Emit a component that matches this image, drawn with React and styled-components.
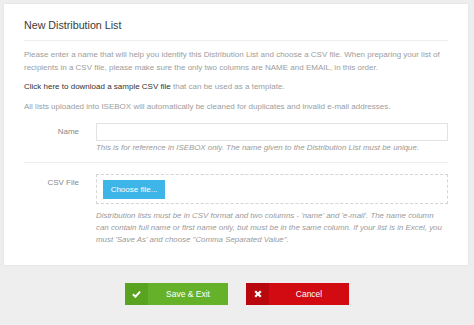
import React from 'react';
import styled, { createGlobalStyle } from 'styled-components';

const GlobalStyle = createGlobalStyle`
  html, body {
    margin: 0;
    padding: 0;
    background: #eeeeee;
    font-family: "Liberation Sans", Arial, sans-serif;
  }
`;

const App = () => {
  return (
    <>
      <GlobalStyle />
      <Page>
        <Card>
          <Title>New Distribution List</Title>
          <Intro>
            Please enter a name that will help you identify this Distribution List and choose a CSV file. When preparing your list of
            recipients in a CSV file, please make sure the only two columns are NAME and EMAIL, in this order.
          </Intro>
          <Intro>
            <DownloadLink href="#">Click here to download a sample CSV file</DownloadLink> that can be used as a template.
          </Intro>
          <Intro>All lists uploaded into ISEBOX will automatically be cleaned for duplicates and invalid e-mail addresses.</Intro>

          <FormRow>
            <Label>Name</Label>
            <Field>
              <TextInput type="text" />
              <Hint>This is for reference in ISEBOX only. The name given to the Distribution List must be unique.</Hint>
            </Field>
          </FormRow>
          <FormRow $last>
            <Label>CSV File</Label>
            <Field>
              <DropZone>
                <ChooseButton type="button">Choose file...</ChooseButton>
              </DropZone>
              <Hint $gap={6}>
                Distribution lists must be in CSV format and two columns - 'name' and 'e-mail'. The name column
                can contain full name or first name only, but must be in the same column. If your list is in Excel, you
                must 'Save As' and choose "Comma Separated Value".
              </Hint>
            </Field>
          </FormRow>
        </Card>

        <Actions>
          <ActionButton type="button" $bg="#66b12a" $iconBg="#5aa321">
            <IconCell>
              <svg width="9" height="8" viewBox="0 0 10 8">
                <path d="M1 4.2 L3.8 7 L9 1.4" fill="none" stroke="#fff" strokeWidth="2.2" />
              </svg>
            </IconCell>
            <ButtonLabel>Save &amp; Exit</ButtonLabel>
          </ActionButton>
          <ActionButton type="button" $bg="#d20a12" $iconBg="#b9070e">
            <IconCell>
              <svg width="8" height="8" viewBox="0 0 8 8">
                <path d="M1.2 1.2 L6.8 6.8 M6.8 1.2 L1.2 6.8" fill="none" stroke="#fff" strokeWidth="2.2" />
              </svg>
            </IconCell>
            <ButtonLabel>Cancel</ButtonLabel>
          </ActionButton>
        </Actions>
      </Page>
    </>
  );
};

const Page = styled.div`
  width: 474px;
  height: 325px;
  padding: 4px 6px 0 4px;
  box-sizing: border-box;
  overflow: hidden;
`;

const Card = styled.div`
  background: #fff;
  box-shadow: 0 0 2px rgba(0, 0, 0, 0.08);
  padding: 15px 20px 13px 20px;
  height: 261px;
  box-sizing: border-box;
`;

const Title = styled.h2`
  margin: 0;
  font-size: 10.7px;
  font-weight: 400;
  color: #3a3a3a;
  line-height: 13px;
  padding-bottom: 8px;
  border-bottom: 1px solid #eeeeee;
  margin-bottom: 8px;
`;

const Intro = styled.p`
  margin: 0 0 7px 0;
  font-size: 8px;
  line-height: 12.5px;
  color: #9d9d9d;
`;

const DownloadLink = styled.a`
  color: #333;
  text-decoration: none;
`;

const FormRow = styled.div`
  display: grid;
  grid-template-columns: 72px 1fr;
  padding: ${(p) => (p.$last ? '11px 0 0 0' : '3px 0 8px 0')};
  border-bottom: ${(p) => (p.$last ? 'none' : '1px solid #eeeeee')};
`;

const Label = styled.div`
  text-align: right;
  padding-right: 17px;
  font-size: 8px;
  color: #888;
  line-height: 18px;
`;

const Field = styled.div`
  display: flex;
  flex-direction: column;
`;

const TextInput = styled.input`
  height: 18px;
  box-sizing: border-box;
  border: 1px solid #e3e3e3;
  margin: 0;
  outline: none;
`;

const Hint = styled.div`
  font-style: italic;
  font-size: 7.9px;
  line-height: 12px;
  color: #9a9a9a;
  margin-top: ${(p) => (p.$gap ? `${p.$gap}px` : '1px')};
`;

const DropZone = styled.div`
  border: 1px dashed #d5d5d5;
  height: 30px;
  box-sizing: border-box;
  padding: 4px 6px;
  display: flex;
  align-items: center;
`;

const ChooseButton = styled.button`
  background: #3db5e8;
  border: none;
  color: #fff;
  font-family: "Liberation Sans", Arial, sans-serif;
  font-size: 8px;
  height: 19px;
  width: 62px;
  padding: 0;
`;

const Actions = styled.div`
  display: flex;
  justify-content: center;
  gap: 18px;
  padding-top: 18px;
  padding-left: 2px;
`;

const ActionButton = styled.button`
  display: flex;
  align-items: stretch;
  width: 103px;
  height: 22px;
  padding: 0;
  border: none;
  background: ${(p) => p.$bg};
  color: #fff;
  font-family: "Liberation Sans", Arial, sans-serif;
  & > span:first-child {
    background: ${(p) => p.$iconBg};
  }
`;

const IconCell = styled.span`
  width: 23px;
  display: flex;
  align-items: center;
  justify-content: center;
`;

const ButtonLabel = styled.span`
  flex: 1;
  display: flex;
  align-items: center;
  justify-content: center;
  font-size: 8.5px;
`;

export default App;
